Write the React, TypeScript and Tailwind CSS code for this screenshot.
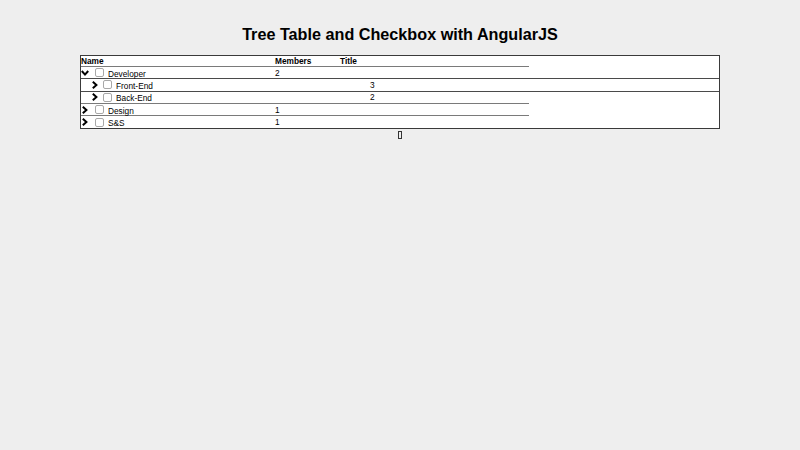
import React from "react";

type Row = {
  name: string;
  members?: string;
  nested?: boolean;
  open?: boolean;
  full?: boolean;
  last?: boolean;
};

const rows: Row[] = [
  { name: "Developer", members: "2", open: true, full: true },
  { name: "Front-End", members: "3", nested: true, full: true },
  { name: "Back-End", members: "2", nested: true },
  { name: "Design", members: "1" },
  { name: "S&S", members: "1", last: true },
];

function Chevron({ open }: { open?: boolean }) {
  return (
    <svg width="8" height="8" viewBox="0 0 8 8" className="shrink-0">
      {open ? (
        <polyline points="0.8,2 4,5.6 7.2,2" fill="none" stroke="#000" strokeWidth="2" />
      ) : (
        <polyline points="1.8,0.8 5.4,4 1.8,7.2" fill="none" stroke="#000" strokeWidth="2" />
      )}
    </svg>
  );
}

function Box() {
  return <span className="block h-[9px] w-[9px] shrink-0 rounded-[2px] border border-[#a8a8a8] bg-white" />;
}

export default function App() {
  return (
    <div className="h-[450px] w-[800px] bg-[#eeeeee] text-black" style={{ fontFamily: '"Liberation Sans", Arial, sans-serif' }}>
      <h1 className="pt-[24px] text-center text-[16.2px] font-bold leading-[20px]">
        Tree Table and Checkbox with AngularJS
      </h1>
      <div className="mx-[80px] mt-[11px] border border-[#3a3a3a] bg-white text-[8.3px] leading-[10px]">
        <div className="flex h-[11px] w-[448px] items-center border-b border-[#7a7a7a] font-bold">
          <span className="w-[194px]">Name</span>
          <span className="w-[65px]">Members</span>
          <span>Title</span>
        </div>
        {rows.map((r) => (
          <div
            key={r.name}
            className={
              "flex h-[12.3px] items-center " +
              (r.last ? "" : r.full ? "w-full border-b border-[#4a4a4a]" : "w-[448px] border-b border-[#7a7a7a]")
            }
          >
            <div className={"flex w-[194px] items-center " + (r.nested ? "pl-[10px]" : "")}>
              <span className={r.nested ? "" : "w-[8px]"}>
                <Chevron open={r.open} />
              </span>
              <span className={r.nested ? "ml-[4px]" : "ml-[6px]"}>
                <Box />
              </span>
              <span className="ml-[4px] pt-[2px]">{r.name}</span>
            </div>
            {r.nested ? (
              <span className="ml-[95px]">{r.members}</span>
            ) : (
              <span>{r.members}</span>
            )}
          </div>
        ))}
      </div>
      <div className="mt-[2px] flex justify-center">
        <span className="block h-[8px] w-[4px] border border-[#333]" />
      </div>
    </div>
  );
}
